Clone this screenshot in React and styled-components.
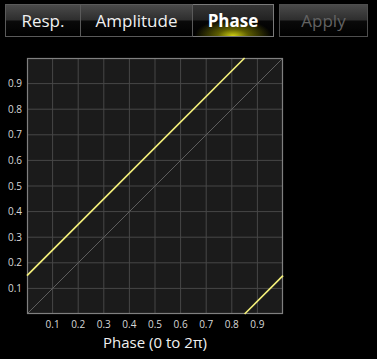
import React from "react";
import styled, { createGlobalStyle, css } from "styled-components";

const GlobalStyle = createGlobalStyle`
  html, body {
    margin: 0;
    padding: 0;
    background: #000;
  }
  body {
    font-family: "Open Sans", "Noto Sans", sans-serif;
    color: #eee;
  }
`;

const PLOT = 256;
const LEFT = 27;
const TOP = 10;
const ticks = [0.1, 0.2, 0.3, 0.4, 0.5, 0.6, 0.7, 0.8, 0.9];

const px = (v) => LEFT + v * PLOT;
const py = (v) => TOP + PLOT - v * PLOT;

const App = () => {
  return (
    <>
      <GlobalStyle />
      <Page>
        <Toolbar>
          <TabGroup>
            <Tab width={76}>Resp.</Tab>
            <Tab width={112}>Amplitude</Tab>
            <Tab width={81} active>
              Phase
            </Tab>
          </TabGroup>
          <Tab width={89} disabled>
            Apply
          </Tab>
        </Toolbar>
        <ChartArea>
          <svg width="377" height="286" viewBox="0 0 377 286">
            <rect x={LEFT} y={TOP} width={PLOT} height={PLOT} fill="#1b1b1b" />
            {ticks.map((t) => (
              <g key={t}>
                <line
                  x1={px(t)}
                  x2={px(t)}
                  y1={TOP}
                  y2={TOP + PLOT}
                  stroke="#474747"
                  strokeWidth="1"
                />
                <line
                  x1={LEFT}
                  x2={LEFT + PLOT}
                  y1={py(t)}
                  y2={py(t)}
                  stroke="#474747"
                  strokeWidth="1"
                />
                <text
                  x={22}
                  y={py(t) + 3.5}
                  textAnchor="end"
                  fontSize="10"
                  fill="#d8d8d8"
                  fontFamily="Open Sans, sans-serif"
                >
                  {t.toFixed(1)}
                </text>
                <text
                  x={px(t)}
                  y={TOP + PLOT + 14}
                  textAnchor="middle"
                  fontSize="10"
                  fill="#d8d8d8"
                  fontFamily="Open Sans, sans-serif"
                >
                  {t.toFixed(1)}
                </text>
              </g>
            ))}
            <line
              x1={px(0)}
              y1={py(0)}
              x2={px(1)}
              y2={py(1)}
              stroke="#5e5e5e"
              strokeWidth="1"
            />
            <rect
              x={LEFT + 0.5}
              y={TOP + 0.5}
              width={PLOT - 1}
              height={PLOT - 1}
              fill="none"
              stroke="#808080"
              strokeWidth="1.2"
            />
            <line
              x1={px(0)}
              y1={py(0.15)}
              x2={px(0.85)}
              y2={py(1)}
              stroke="#f4f07a"
              strokeWidth="1.7"
            />
            <line
              x1={px(0.85)}
              y1={py(0)}
              x2={px(1)}
              y2={py(0.15)}
              stroke="#f4f07a"
              strokeWidth="1.7"
            />
          </svg>
          <AxisTitle>Phase (0 to 2π)</AxisTitle>
        </ChartArea>
      </Page>
    </>
  );
};

export default App;

const Page = styled.div`
  width: 377px;
  height: 359px;
  background: #000;
  overflow: hidden;
`;

const Toolbar = styled.div`
  display: flex;
  align-items: flex-start;
  gap: 5px;
  padding: 4px 0 0 5px;
`;

const TabGroup = styled.div`
  display: flex;

  & > div + div {
    border-left: none;
  }
`;

const Tab = styled.div`
  box-sizing: border-box;
  width: ${(p) => p.width}px;
  height: 33px;
  display: flex;
  align-items: center;
  justify-content: center;
  font-size: 17px;
  color: #f0f0f0;
  border: 1px solid #5a5a5a;
  background: linear-gradient(
    to bottom,
    #4a4a4a 0%,
    #2e2e2e 48%,
    #0a0a0a 52%,
    #000 100%
  );
  padding-bottom: 1px;

  ${(p) =>
    p.active &&
    css`
      font-weight: 700;
      color: #fff;
      border-color: #7a7a7a;
      background: radial-gradient(
          ellipse 48% 55% at 50% 100%,
          rgba(220, 220, 20, 0.95) 0%,
          rgba(170, 170, 0, 0.55) 40%,
          rgba(0, 0, 0, 0) 100%
        ),
        linear-gradient(
          to bottom,
          #363636 0%,
          #222 48%,
          #060606 52%,
          #000 100%
        );
    `}

  ${(p) =>
    p.disabled &&
    css`
      color: #626262;
      border-color: #4e4e4e;
    `}
`;

const ChartArea = styled.div`
  margin-top: 11px;
  position: relative;
  display: flex;
  flex-direction: column;
`;

const AxisTitle = styled.div`
  width: ${PLOT}px;
  margin-left: ${LEFT}px;
  margin-top: -2px;
  text-align: center;
  font-size: 15px;
  color: #f0f0f0;
`;
